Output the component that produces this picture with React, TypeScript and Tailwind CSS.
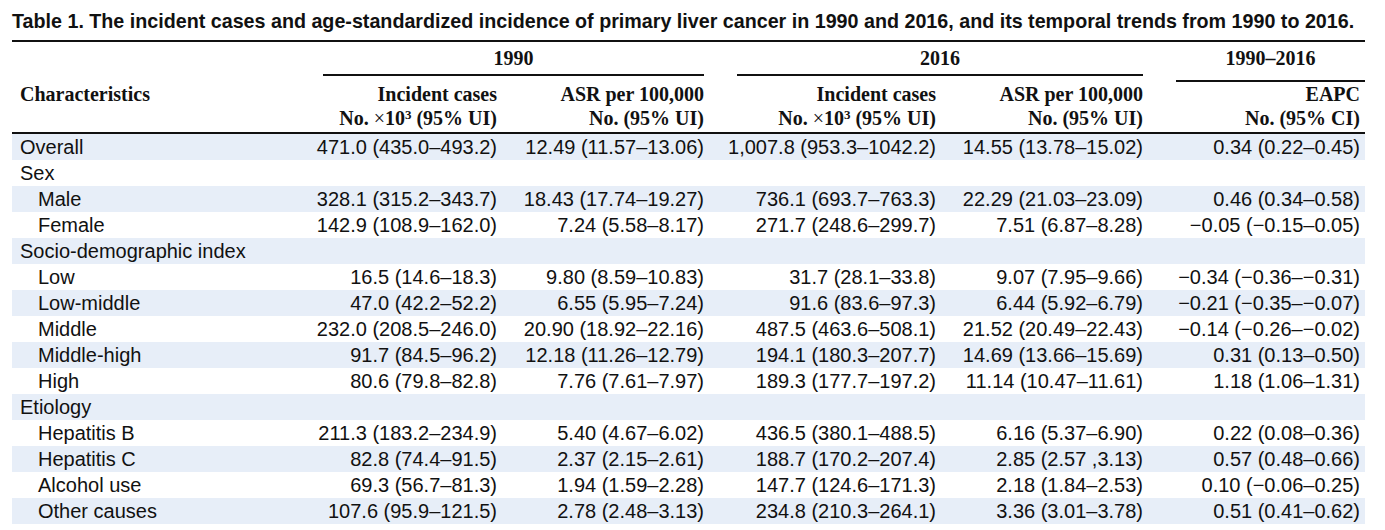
import React from 'react';

type Row = {
    label: string;
    indent?: boolean;
    values?: string[];
};

const rows: Row[] = [
    { label: 'Overall', values: ['471.0 (435.0–493.2)', '12.49 (11.57–13.06)', '1,007.8 (953.3–1042.2)', '14.55 (13.78–15.02)', '0.34 (0.22–0.45)'] },
    { label: 'Sex' },
    { label: 'Male', indent: true, values: ['328.1 (315.2–343.7)', '18.43 (17.74–19.27)', '736.1 (693.7–763.3)', '22.29 (21.03–23.09)', '0.46 (0.34–0.58)'] },
    { label: 'Female', indent: true, values: ['142.9 (108.9–162.0)', '7.24 (5.58–8.17)', '271.7 (248.6–299.7)', '7.51 (6.87–8.28)', '−0.05 (−0.15–0.05)'] },
    { label: 'Socio-demographic index' },
    { label: 'Low', indent: true, values: ['16.5 (14.6–18.3)', '9.80 (8.59–10.83)', '31.7 (28.1–33.8)', '9.07 (7.95–9.66)', '−0.34 (−0.36–−0.31)'] },
    { label: 'Low-middle', indent: true, values: ['47.0 (42.2–52.2)', '6.55 (5.95–7.24)', '91.6 (83.6–97.3)', '6.44 (5.92–6.79)', '−0.21 (−0.35–−0.07)'] },
    { label: 'Middle', indent: true, values: ['232.0 (208.5–246.0)', '20.90 (18.92–22.16)', '487.5 (463.6–508.1)', '21.52 (20.49–22.43)', '−0.14 (−0.26–−0.02)'] },
    { label: 'Middle-high', indent: true, values: ['91.7 (84.5–96.2)', '12.18 (11.26–12.79)', '194.1 (180.3–207.7)', '14.69 (13.66–15.69)', '0.31 (0.13–0.50)'] },
    { label: 'High', indent: true, values: ['80.6 (79.8–82.8)', '7.76 (7.61–7.97)', '189.3 (177.7–197.2)', '11.14 (10.47–11.61)', '1.18 (1.06–1.31)'] },
    { label: 'Etiology' },
    { label: 'Hepatitis B', indent: true, values: ['211.3 (183.2–234.9)', '5.40 (4.67–6.02)', '436.5 (380.1–488.5)', '6.16 (5.37–6.90)', '0.22 (0.08–0.36)'] },
    { label: 'Hepatitis C', indent: true, values: ['82.8 (74.4–91.5)', '2.37 (2.15–2.61)', '188.7 (170.2–207.4)', '2.85 (2.57 ,3.13)', '0.57 (0.48–0.66)'] },
    { label: 'Alcohol use', indent: true, values: ['69.3 (56.7–81.3)', '1.94 (1.59–2.28)', '147.7 (124.6–171.3)', '2.18 (1.84–2.53)', '0.10 (−0.06–0.25)'] },
    { label: 'Other causes', indent: true, values: ['107.6 (95.9–121.5)', '2.78 (2.48–3.13)', '234.8 (210.3–264.1)', '3.36 (3.01–3.78)', '0.51 (0.41–0.62)'] },
];

const cols = 'grid grid-cols-[288px_205px_207px_232px_207px_214px]';

export default function App() {
    return (
        <div className="w-[1385px] h-[530px] bg-white text-[#111] overflow-hidden pl-[12px] pr-[20px]">
            <div className="pt-[9px] leading-[24px] text-[19.7px] font-bold whitespace-nowrap font-['Liberation_Sans',sans-serif]">
                Table 1. The incident cases and age-standardized incidence of primary liver cancer in 1990 and 2016, and its temporal trends from 1990 to 2016.
            </div>

            <div className="mt-[7px] border-t-2 border-[#111] font-['Liberation_Serif',serif] font-bold text-[20px] leading-[24px]">
                <div className={`${cols} items-start`}>
                    <div />
                    <div className="col-span-2 pl-[23px] pr-[8px]">
                        <div className="pt-[4px] pb-[4px] text-center border-b-2 border-[#111]">1990</div>
                    </div>
                    <div className="col-span-2 pl-[25px] pr-[8px]">
                        <div className="pt-[4px] pb-[4px] text-center border-b-2 border-[#111]">2016</div>
                    </div>
                    <div className="pl-[25px]">
                        <div className="pt-[4px] pb-[10px] text-center border-b-2 border-[#111]">1990–2016</div>
                    </div>
                </div>

                <div className={`${cols} pb-[2px] border-b-2 border-[#111]`}>
                    <div className="pl-[8px]">Characteristics</div>
                    <div className="text-right pr-[8px]">
                        <div>Incident cases</div>
                        <div>
                            No. <span className="font-normal">×</span>10<sup className="text-[13px]">3</sup> (95% UI)
                        </div>
                    </div>
                    <div className="text-right pr-[8px]">
                        <div>ASR per 100,000</div>
                        <div>No. (95% UI)</div>
                    </div>
                    <div className="text-right pr-[8px]">
                        <div>Incident cases</div>
                        <div>
                            No. <span className="font-normal">×</span>10<sup className="text-[13px]">3</sup> (95% UI)
                        </div>
                    </div>
                    <div className="text-right pr-[8px]">
                        <div>ASR per 100,000</div>
                        <div>No. (95% UI)</div>
                    </div>
                    <div className="text-right pr-[5px]">
                        <div>EAPC</div>
                        <div>No. (95% CI)</div>
                    </div>
                </div>
            </div>

            <div className="font-['Liberation_Sans',sans-serif] text-[20px] leading-[26px] whitespace-nowrap">
                {rows.map((row, i) => (
                    <div key={row.label} className={`${cols} h-[26px] ${i % 2 === 0 ? 'bg-[#e7eef8]' : 'bg-white'}`}>
                        <div className={row.indent ? 'pl-[26px]' : 'pl-[8px]'}>{row.label}</div>
                        {row.values
                            ? row.values.map((v, j) => (
                                  <div key={j} className={`text-right ${j === 4 ? 'pr-[5px]' : 'pr-[8px]'}`}>
                                      {v}
                                  </div>
                              ))
                            : null}
                    </div>
                ))}
            </div>
        </div>
    );
}
